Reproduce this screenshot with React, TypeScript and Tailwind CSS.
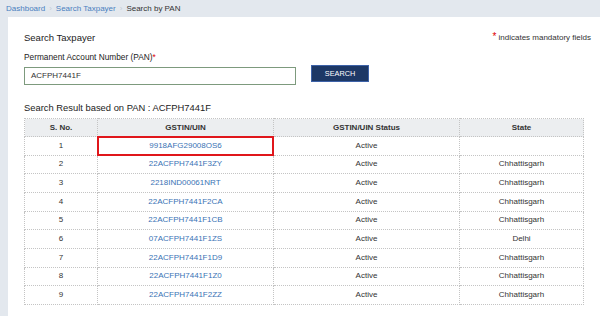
import React from 'react';

const rows = [
  { no: 1, gstin: '9918AFG29008OS6', status: 'Active', state: '' },
  { no: 2, gstin: '22ACFPH7441F3ZY', status: 'Active', state: 'Chhattisgarh' },
  { no: 3, gstin: '2218IND00061NRT', status: 'Active', state: 'Chhattisgarh' },
  { no: 4, gstin: '22ACFPH7441F2CA', status: 'Active', state: 'Chhattisgarh' },
  { no: 5, gstin: '22ACFPH7441F1CB', status: 'Active', state: 'Chhattisgarh' },
  { no: 6, gstin: '07ACFPH7441F1ZS', status: 'Active', state: 'Delhi' },
  { no: 7, gstin: '22ACFPH7441F1D9', status: 'Active', state: 'Chhattisgarh' },
  { no: 8, gstin: '22ACFPH7441F1Z0', status: 'Active', state: 'Chhattisgarh' },
  { no: 9, gstin: '22ACFPH7441F2ZZ', status: 'Active', state: 'Chhattisgarh' },
];

function Breadcrumb() {
  return (
    <div className="h-[17px] flex items-center pl-[6px] gap-[4px] text-[8px] leading-[10px]">
      <span className="text-[#4a7fc0]">Dashboard</span>
      <span className="text-[#c4ccd6]">›</span>
      <span className="text-[#4a7fc0]">Search Taxpayer</span>
      <span className="text-[#c4ccd6]">›</span>
      <span className="text-[#333]">Search by PAN</span>
    </div>
  );
}

export default function App() {
  return (
    <div
      className="w-[600px] h-[316px] overflow-hidden bg-[#e3e8ee] text-[#333]"
      style={{ fontFamily: '"Liberation Sans", Arial, sans-serif' }}
    >
      <Breadcrumb />
      <div className="ml-[8px] h-[299px] bg-white pl-[16px] pr-[17px] pt-[15px]">
        <div className="flex items-center justify-between h-[12px]">
          <h1 className="text-[9.5px] leading-[12px] font-normal text-[#222]">Search Taxpayer</h1>
          <div className="text-[8px] leading-[10px] mr-[-8px] flex items-start">
            <span className="text-[#e00000] text-[10px] leading-[8px] mr-[2px]">*</span>
            <span>indicates mandatory fields</span>
          </div>
        </div>

        <div className="mt-[8px] h-[10px] text-[8.3px] leading-[10px] text-[#222]">
          Permanent Account Number (PAN)<span className="text-[#e00000]">*</span>
        </div>

        <div className="mt-[3px] flex items-start">
          <div className="mt-[2px] w-[272px] h-[18px] border border-[#7d9a7d] flex items-center pl-[6px] text-[8px] text-[#333]">
            ACFPH7441F
          </div>
          <button className="ml-[15px] w-[58px] h-[17px] bg-[#1d3866] border border-[#3d62a8] text-white text-[7.3px] leading-[15px]">
            SEARCH
          </button>
        </div>

        <div className="mt-[17px] h-[12px] text-[9.4px] leading-[12px] text-[#222]">
          Search Result based on PAN : ACFPH7441F
        </div>

        <table className="mt-[4px] w-[559px] table-fixed border-collapse text-[8px] text-center">
          <colgroup>
            <col className="w-[73px]" />
            <col className="w-[176px]" />
            <col className="w-[186px]" />
            <col className="w-[124px]" />
          </colgroup>
          <thead>
            <tr className="h-[18px] bg-[#eceef0]">
              <th className="border border-dotted border-[#c4c4c4] font-bold">S. No.</th>
              <th className="border border-dotted border-[#c4c4c4] font-bold">GSTIN/UIN</th>
              <th className="border border-dotted border-[#c4c4c4] font-bold">GSTIN/UIN Status</th>
              <th className="border border-dotted border-[#c4c4c4] font-bold">State</th>
            </tr>
          </thead>
          <tbody>
            {rows.map((r) => (
              <tr key={r.no} className="h-[18.67px]">
                <td className="border border-dotted border-[#c4c4c4]">{r.no}</td>
                <td className="relative border border-dotted border-[#c4c4c4] text-[#3a73b5]">
                  {r.gstin}
                  {r.no === 1 && (
                    <div className="absolute inset-[-1px] border-2 border-[#e0161b]" />
                  )}
                </td>
                <td className="border border-dotted border-[#c4c4c4]">{r.status}</td>
                <td className="border border-dotted border-[#c4c4c4]">{r.state}</td>
              </tr>
            ))}
          </tbody>
        </table>
      </div>
    </div>
  );
}
